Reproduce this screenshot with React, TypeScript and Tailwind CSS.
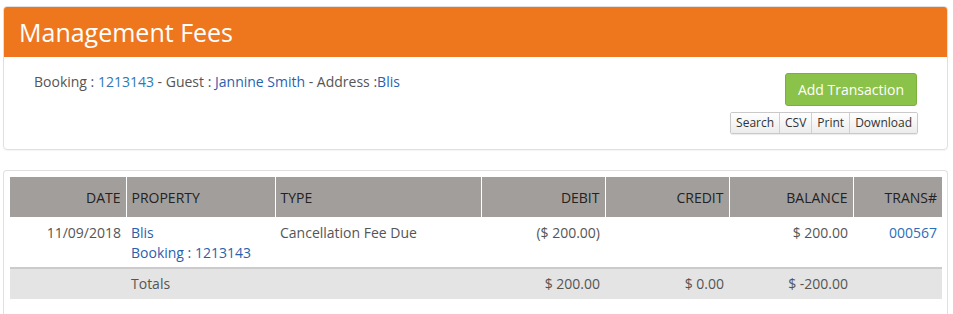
import React from 'react';

const cols = [
  { label: 'DATE', w: 'w-[116px]', align: 'text-right' },
  { label: 'PROPERTY', w: 'w-[149px]', align: 'text-left' },
  { label: 'TYPE', w: 'w-[206px]', align: 'text-left' },
  { label: 'DEBIT', w: 'w-[124px]', align: 'text-right' },
  { label: 'CREDIT', w: 'w-[124px]', align: 'text-right' },
  { label: 'BALANCE', w: 'w-[124px]', align: 'text-right' },
  { label: 'TRANS#', w: 'w-[89px]', align: 'text-right' },
];

const tools = ['Search', 'CSV', 'Print', 'Download'];

export default function App() {
  return (
    <div className="min-h-screen bg-white pt-[6px] pl-[3px] font-['Open_Sans',sans-serif] text-[14px] text-[#555]">
      <section className="w-[945px] overflow-hidden rounded-[4px] border border-[#e0e0e0] shadow-[0_1px_1px_rgba(0,0,0,0.04)]">
        <div className="flex h-[50px] items-center bg-[#ee771d] pl-[15px]">
          <h1 className="text-[25px] leading-none text-white">Management Fees</h1>
        </div>
        <div className="flex justify-between pt-[15px] pr-[29px] pb-[15px] pl-[30px]">
          <p className="leading-[20px]">
            Booking : <span className="text-[#2a7ab8]">1213143</span> - Guest :{' '}
            <span className="text-[#2a5fb0]">Jannine Smith</span> - Address :
            <span className="text-[#2a5fb0]">Blis</span>
          </p>
          <div className="flex flex-col items-end">
            <button
              type="button"
              className="mt-[1px] mr-[1px] h-[33px] w-[132px] rounded-[3px] border border-[#7bb03d] bg-[#8bc249] text-[14px] text-white"
            >
              Add Transaction
            </button>
            <div className="mt-[6px] flex h-[22px] overflow-hidden rounded-[2px] border border-[#c9c9c9] shadow-[0_1px_1px_rgba(0,0,0,0.08)]">
              {tools.map((t, i) => (
                <button
                  key={t}
                  type="button"
                  className={`bg-gradient-to-b from-white to-[#ececec] px-[5px] text-[12px] leading-[20px] text-[#333] ${
                    i > 0 ? 'border-l border-[#d0d0d0]' : ''
                  }`}
                >
                  {t}
                </button>
              ))}
            </div>
          </div>
        </div>
      </section>

      <section className="mt-[20px] h-[144px] w-[945px] rounded-t-[4px] border border-b-0 border-[#e0e0e0] px-[6px] pt-[6px]">
        <table className="w-[932px] table-fixed border-collapse">
          <thead>
            <tr className="h-[40px] bg-[#a29e9c] text-[#222]">
              {cols.map((c, i) => (
                <th
                  key={c.label}
                  className={`${c.w} ${c.align} px-[5px] font-normal ${
                    i > 0 ? 'border-l border-white' : ''
                  }`}
                >
                  {c.label}
                </th>
              ))}
            </tr>
          </thead>
          <tbody>
            <tr className="h-[51px] align-top leading-[20px]">
              <td className="px-[5px] pt-[6px] text-right">11/09/2018</td>
              <td className="px-[5px] pt-[6px] text-[#2a5fb0]">
                <div>Blis</div>
                <div>Booking : 1213143</div>
              </td>
              <td className="px-[5px] pt-[6px]">Cancellation Fee Due</td>
              <td className="px-[5px] pt-[6px] text-right">($ 200.00)</td>
              <td className="px-[5px] pt-[6px] text-right"></td>
              <td className="px-[5px] pt-[6px] text-right">$ 200.00</td>
              <td className="px-[5px] pt-[6px] text-right text-[#2a6ebb]">000567</td>
            </tr>
            <tr className="h-[31px] border-t-2 border-[#cbcbcb] bg-[#e4e4e4] leading-[20px]">
              <td className="px-[5px]"></td>
              <td className="px-[5px]">Totals</td>
              <td className="px-[5px]"></td>
              <td className="px-[5px] text-right">$ 200.00</td>
              <td className="px-[5px] text-right">$ 0.00</td>
              <td className="px-[5px] text-right">$ -200.00</td>
              <td className="px-[5px]"></td>
            </tr>
          </tbody>
        </table>
      </section>
    </div>
  );
}
